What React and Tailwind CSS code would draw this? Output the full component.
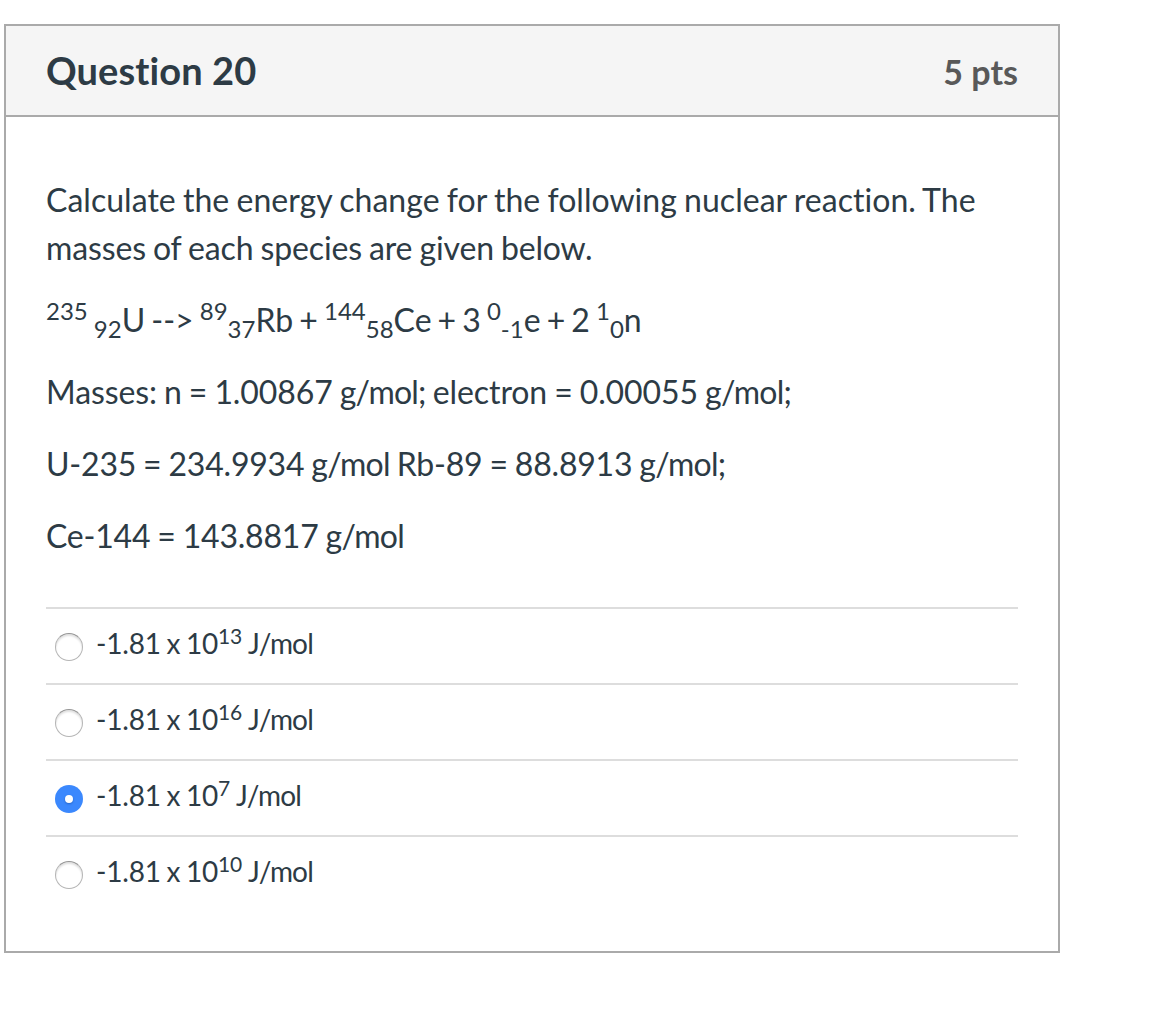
const Sup = ({ children }) => <sup className="relative -top-[0.5em] align-baseline text-[75%] leading-[0]">{children}</sup>;
const Sub = ({ children }) => <sub className="relative top-[0.25em] bottom-auto align-baseline text-[75%] leading-[0]">{children}</sub>;
const Unit = ({ children }) => <span className="tracking-[-0.024em]">{children}</span>;

const answers = [
  { exp: "13", selected: false },
  { exp: "16", selected: false },
  { exp: "7", selected: true },
  { exp: "10", selected: false },
];

function Radio({ selected }) {
  return selected ? (
    <span className="flex size-7 items-center justify-center rounded-full bg-[#3b88fd]">
      <span className="size-2 rounded-full bg-white shadow-[0_1px_2px_#2565c8]" />
    </span>
  ) : (
    <span className="block size-7 rounded-full border border-[#b5b5b5] border-t-[#959595] bg-white shadow-[inset_0_2px_2px_#e0e0e0]" />
  );
}

export default function App() {
  return (
    <div className="h-[1010px] bg-white pt-6 pl-1 font-['Lato',sans-serif] text-[#2d3b45] [font-variant-ligatures:none]">
      <section className="h-[929px] w-[1056px] border-2 border-[#aaaaaa]">
        <header className="flex h-[91px] items-center justify-between border-b-2 border-[#aaaaaa] bg-[#f5f5f5] px-10 font-bold">
          <h1 className="pb-0.5 text-[38px] leading-[48px] tracking-[0.1px]">Question 20</h1>
          <span className="pt-0.5 text-[34px] leading-[48px] text-[#595959]">5 pts</span>
        </header>
        <div className="px-10 pt-[59px]">
          <div className="flex flex-col gap-6 text-[32px] leading-[48px] whitespace-nowrap [word-spacing:-1px]">
            <p>
              <span className="tracking-[0.03px]">Calculate the energy change for the following nuclear reaction. The</span>
              <br />
              <span className="tracking-[-0.14px]">masses of each species are given below.</span>
            </p>
            <p className="[word-spacing:-2.1px]"><Sup>235</Sup> <Sub>92</Sub>U --&gt; <Sup>89</Sup><Sub>37</Sub>Rb + <Sup>144</Sup><Sub>58</Sub>Ce + 3 <Sup>0</Sup><Sub>-1</Sub>e + 2 <Sup>1</Sup><Sub>0</Sub>n</p>
            <p className="tracking-[-0.1px]">Masses: n = 1.00867 <Unit>g/mol;</Unit> electron = 0.00055 <Unit>g/mol;</Unit></p>
            <p className="tracking-[-0.2px]">U-235 = 234.9934 <Unit>g/mol</Unit> Rb-89 = 88.8913 <Unit>g/mol;</Unit></p>
            <p className="tracking-[-0.2px]">Ce-144 = 143.8817 <Unit>g/mol</Unit></p>
          </div>
          <div className="mt-[47px]">
            {answers.map(({ exp, selected }) => (
              <label key={exp} className="flex h-[76px] gap-[13px] border-t-2 border-[#dddddd] pl-[9px]">
                <span className="pt-6"><Radio selected={selected} /></span>
                <span className="pt-[13px] text-[28px] leading-[42px] tracking-[-0.2px] [word-spacing:-1.2px]">-1.81 x 10<Sup>{exp}</Sup><span className="tracking-[-0.8px] [word-spacing:0.4px]"> J/mol</span></span>
              </label>
            ))}
          </div>
        </div>
      </section>
    </div>
  );
}
